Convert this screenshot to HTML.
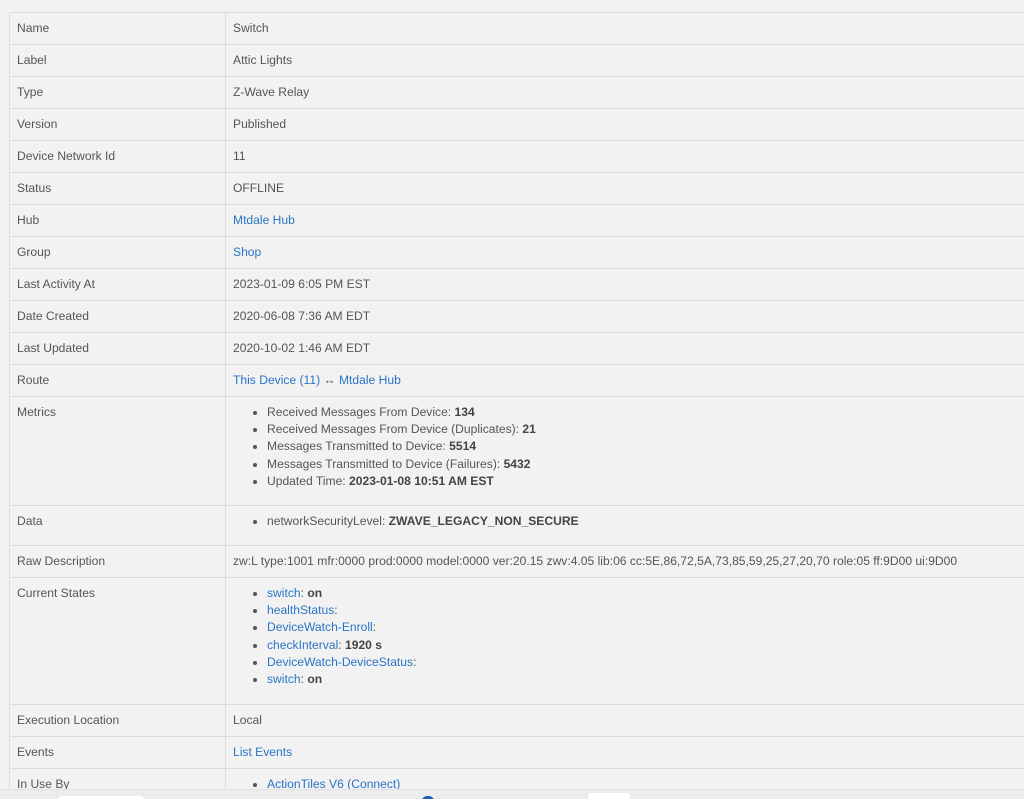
<!DOCTYPE html>
<html><head><meta charset="utf-8"><style>
html,body{margin:0;padding:0;background:#f2f2f2;width:1024px;height:799px;overflow:hidden;font-family:"Liberation Sans",Arial,sans-serif;font-size:12.1px;color:#555}
.wrap{position:relative;width:1024px;height:799px;overflow:hidden}
table{position:absolute;left:9px;top:12px;width:1030px;border-collapse:collapse;background:#f2f2f2}
td{border:1px solid #dcdcdc;padding:0 7px;height:31px;vertical-align:top;line-height:31px;white-space:nowrap}
td.k{width:201px}
a{color:#2a74c6;text-decoration:none}
ul{margin:0;padding:7px 0 0 34px;line-height:17.2px}
li{list-style:disc}
b{color:#444}
.bar{position:absolute;left:0;top:789px;width:1024px;height:10px;background:#ececec;border-top:1px solid #e2e2e2}
</style></head><body><div class="wrap">
<table>
<tr><td class="k">Name</td><td>Switch</td></tr>
<tr><td class="k">Label</td><td>Attic Lights</td></tr>
<tr><td class="k">Type</td><td>Z-Wave Relay</td></tr>
<tr><td class="k">Version</td><td>Published</td></tr>
<tr><td class="k">Device Network Id</td><td>11</td></tr>
<tr><td class="k">Status</td><td>OFFLINE</td></tr>
<tr><td class="k">Hub</td><td><a>Mtdale Hub</a></td></tr>
<tr><td class="k">Group</td><td><a>Shop</a></td></tr>
<tr><td class="k">Last Activity At</td><td>2023-01-09 6:05 PM EST</td></tr>
<tr><td class="k">Date Created</td><td>2020-06-08 7:36 AM EDT</td></tr>
<tr><td class="k">Last Updated</td><td>2020-10-02 1:46 AM EDT</td></tr>
<tr><td class="k">Route</td><td><a>This Device (11)</a> ↔ <a>Mtdale Hub</a></td></tr>
<tr><td class="k" style="height:108px">Metrics</td><td style="line-height:normal;height:108px"><ul>
<li>Received Messages From Device: <b>134</b></li>
<li>Received Messages From Device (Duplicates): <b>21</b></li>
<li>Messages Transmitted to Device: <b>5514</b></li>
<li>Messages Transmitted to Device (Failures): <b>5432</b></li>
<li>Updated Time: <b>2023-01-08 10:51 AM EST</b></li></ul></td></tr>
<tr><td class="k" style="height:39px">Data</td><td style="line-height:normal;height:39px"><ul><li>networkSecurityLevel: <b>ZWAVE_LEGACY_NON_SECURE</b></li></ul></td></tr>
<tr><td class="k">Raw Description</td><td>zw:L type:1001 mfr:0000 prod:0000 model:0000 ver:20.15 zwv:4.05 lib:06 cc:5E,86,72,5A,73,85,59,25,27,20,70 role:05 ff:9D00 ui:9D00</td></tr>
<tr><td class="k" style="height:126px">Current States</td><td style="line-height:normal;height:126px"><ul>
<li><a>switch</a>: <b>on</b></li>
<li><a>healthStatus</a>:</li>
<li><a>DeviceWatch-Enroll</a>:</li>
<li><a>checkInterval</a>: <b>1920 s</b></li>
<li><a>DeviceWatch-DeviceStatus</a>:</li>
<li><a>switch</a>: <b>on</b></li></ul></td></tr>
<tr><td class="k">Execution Location</td><td>Local</td></tr>
<tr><td class="k">Events</td><td><a>List Events</a></td></tr>
<tr><td class="k" style="height:60px">In Use By</td><td style="line-height:normal"><ul><li><a>ActionTiles V6 (Connect)</a></li></ul></td></tr>
</table>
<div class="bar">
<div style="position:absolute;left:58px;top:6px;width:86px;height:10px;background:#fff;border-radius:4px"></div>
<div style="position:absolute;left:422px;top:6px;width:12px;height:10px;background:#1d5fa8;border-radius:6px"></div>
<div style="position:absolute;left:588px;top:3px;width:42px;height:10px;background:#fff;border-radius:4px"></div>
</div>
</div></body></html>
